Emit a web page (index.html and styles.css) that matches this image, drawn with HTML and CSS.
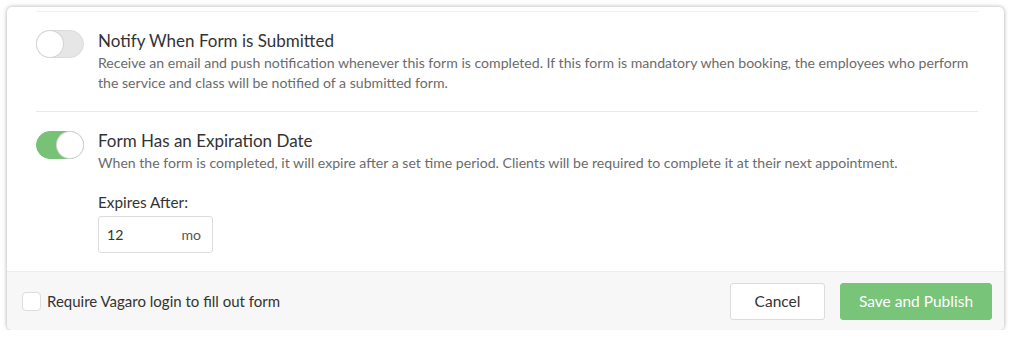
FILE: index.html
```html
<!DOCTYPE html>
<html>
<head>
<meta charset="utf-8">
<link rel="stylesheet" href="styles.css">
</head>
<body>
<div class="card">
  <div class="content">
    <div class="divider top"></div>
    <div class="setting">
      <span class="toggle"><span class="knob"></span></span>
      <div class="text">
        <div class="title">Notify When Form is Submitted</div>
        <div class="desc">Receive an email and push notification whenever this form is completed. If this form is mandatory when booking, the employees who perform the service and class will be notified of a submitted form.</div>
      </div>
    </div>
    <div class="divider"></div>
    <div class="setting second">
      <span class="toggle on"><span class="knob"></span></span>
      <div class="text">
        <div class="title">Form Has an Expiration Date</div>
        <div class="desc">When the form is completed, it will expire after a set time period. Clients will be required to complete it at their next appointment.</div>
        <div class="field-label">Expires After:</div>
        <div class="input"><span class="val">12</span><span class="unit">mo</span></div>
      </div>
    </div>
  </div>
  <div class="footer">
    <label class="check"><span class="box"></span>Require Vagaro login to fill out form</label>
    <div class="actions">
      <button class="btn cancel">Cancel</button>
      <button class="btn primary">Save and Publish</button>
    </div>
  </div>
</div>
</body>
</html>
```
FILE: styles.css
```css
html, body { margin: 0; padding: 0; background: #fff; }
body { font-family: "Lato", "Liberation Sans", sans-serif; color: #333; }
.card {
  margin: 7px 0 0 7px;
  width: 997px;
  height: 323px;
  background: #fff;
  border-radius: 5px;
  box-shadow: 0 0 4px rgba(0,0,0,0.35);
  display: flex;
  flex-direction: column;
  overflow: hidden;
}
.content { flex: 1; padding: 0 26px 0 29px; min-height: 0; }
.divider { height: 1px; background: #e8e8e8; }
.divider.top { margin-top: 4px; background: #f0f0f0; }
.setting { display: flex; gap: 14px; padding: 18px 0 18px; }
.setting.second { padding-top: 18px; padding-bottom: 0; }
.toggle {
  flex: none;
  width: 48px; height: 28px;
  border-radius: 14px;
  background: #e6e6e6;
  border: 1px solid #dcdcdc;
  box-sizing: border-box;
  position: relative;
}
.setting.second .toggle { margin-top: 1px; }
.toggle .knob {
  position: absolute; left: 0; top: 0;
  width: 26px; height: 26px; border-radius: 50%;
  background: #fff;
  box-shadow: 0 0 0 1px #d4d4d4;
}
.toggle.on { background: #77c276; border-color: #77c276; }
.toggle.on .knob { left: 20px; }
.title { font-size: 17px; line-height: 22px; color: #333; }
.desc { font-size: 14.1px; line-height: 20px; color: #6b6b6b; margin-top: 1px; }
.field-label { font-size: 15.3px; color: #333; margin-top: 19px; line-height: 20px; }
.input {
  margin-top: 4px;
  width: 115px; height: 37px; box-sizing: border-box;
  border: 1px solid #ddd; border-radius: 3px;
  display: flex; align-items: center; justify-content: space-between;
  padding: 0 11px 0 8px;
  font-size: 14.1px;
}
.input .unit { color: #555; }
.footer {
  height: 59px; flex: none;
  background: #f7f7f7;
  border-top: 1px solid #ececec;
  box-sizing: border-box;
  display: flex; align-items: center; justify-content: space-between;
  padding: 0 12px 0 15px;
}
.check { display: flex; align-items: center; gap: 6px; font-size: 15px; color: #333; }
.check .box {
  width: 19px; height: 19px; box-sizing: border-box;
  border: 1px solid #ddd; border-radius: 4px; background: #fff;
}
.actions { display: flex; gap: 15px; }
.btn {
  font-family: inherit; font-size: 15.5px; height: 37px; border-radius: 3px; cursor: pointer;
}
.btn.cancel { width: 95px; background: #fff; border: 1px solid #dcdcdc; color: #333; }
.btn.primary { width: 152px; background: #78c479; border: 1px solid #78c479; color: #fff; }
```
